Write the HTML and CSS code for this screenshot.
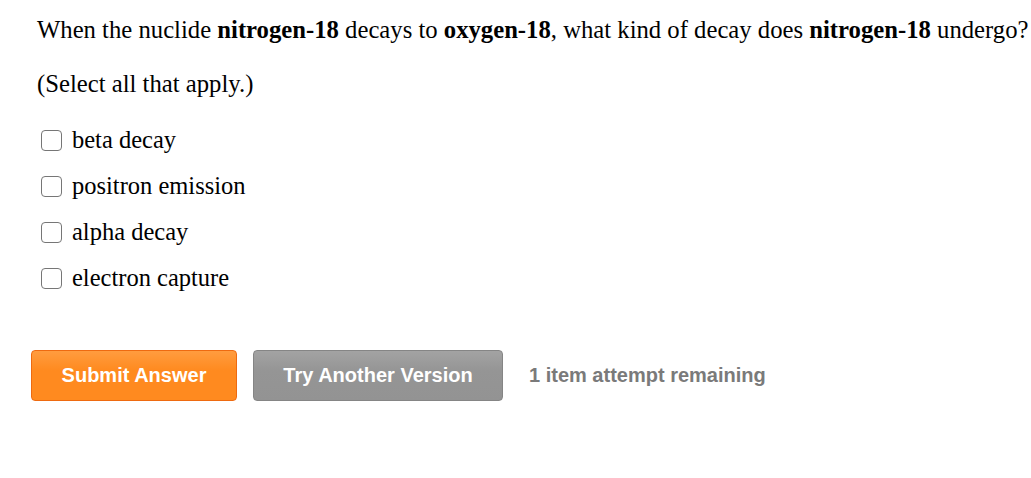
FILE: index.html
```html
<!DOCTYPE html>
<html lang="en">
<head>
    <meta charset="UTF-8">
    <title>Question</title>
    <link rel="stylesheet" href="styles.css">
</head>
<body>

<div class="question">
    <p class="prompt">When the nuclide <strong>nitrogen-18</strong> decays to <strong>oxygen-18</strong>, what kind of decay does <strong>nitrogen-18</strong> undergo?</p>
    <p class="prompt">(Select all that apply.)</p>

    <ul class="choices">
        <li><label><input type="checkbox" name="decay"> beta decay</label></li>
        <li><label><input type="checkbox" name="decay"> positron emission</label></li>
        <li><label><input type="checkbox" name="decay"> alpha decay</label></li>
        <li><label><input type="checkbox" name="decay"> electron capture</label></li>
    </ul>

    <div class="actions">
        <button type="button" class="btn btn-submit">Submit Answer</button>
        <button type="button" class="btn btn-retry">Try Another Version</button>
        <span class="attempts">1 item attempt remaining</span>
    </div>
</div>

</body>
</html>
```

FILE: styles.css
```css
body {
    margin: 0;
    padding: 0;
    background: #fff;
    font-family: "Liberation Serif", "Times New Roman", serif;
    color: #000;
}
.question {
    padding: 17px 0 0 37px;
}
.prompt {
    margin: 0 0 28px 0;
    font-size: 24.7px;
    line-height: 26px;
    white-space: nowrap;
}
.choices {
    list-style: none;
    margin: 0;
    padding: 2px 0 0 4px;
}
.choices li {
    font-size: 24.5px;
    height: 46px;
}
.choices label {
    display: flex;
    align-items: center;
    gap: 10px;
    height: 26px;
}
.choices input {
    appearance: none;
    width: 21px;
    height: 21px;
    margin: 0;
    border: 1px solid #767676;
    border-radius: 4px;
    background: #fff;
}
.actions {
    display: flex;
    align-items: center;
    margin: 39px 0 0 -6px;
}
.btn {
    height: 51px;
    padding: 0;
    border-radius: 4px;
    font-family: "Liberation Sans", Arial, sans-serif;
    font-weight: bold;
    font-size: 20px;
    color: #fff;
    cursor: pointer;
    margin-right: 16px;
}
.btn-submit {
    width: 206px;
    background: linear-gradient(#ff9c3f, #ff8a1f 40%, #ff8a1f);
    border: 1px solid #ee6a10;
}
.btn-retry {
    width: 250px;
    background: linear-gradient(#a3a3a3, #959595 40%, #939393);
    border: 1px solid #858585;
}
.attempts {
    margin-left: 10px;
    font-family: "Liberation Sans", Arial, sans-serif;
    font-weight: bold;
    font-size: 20px;
    color: #7a7a7a;
}
```
